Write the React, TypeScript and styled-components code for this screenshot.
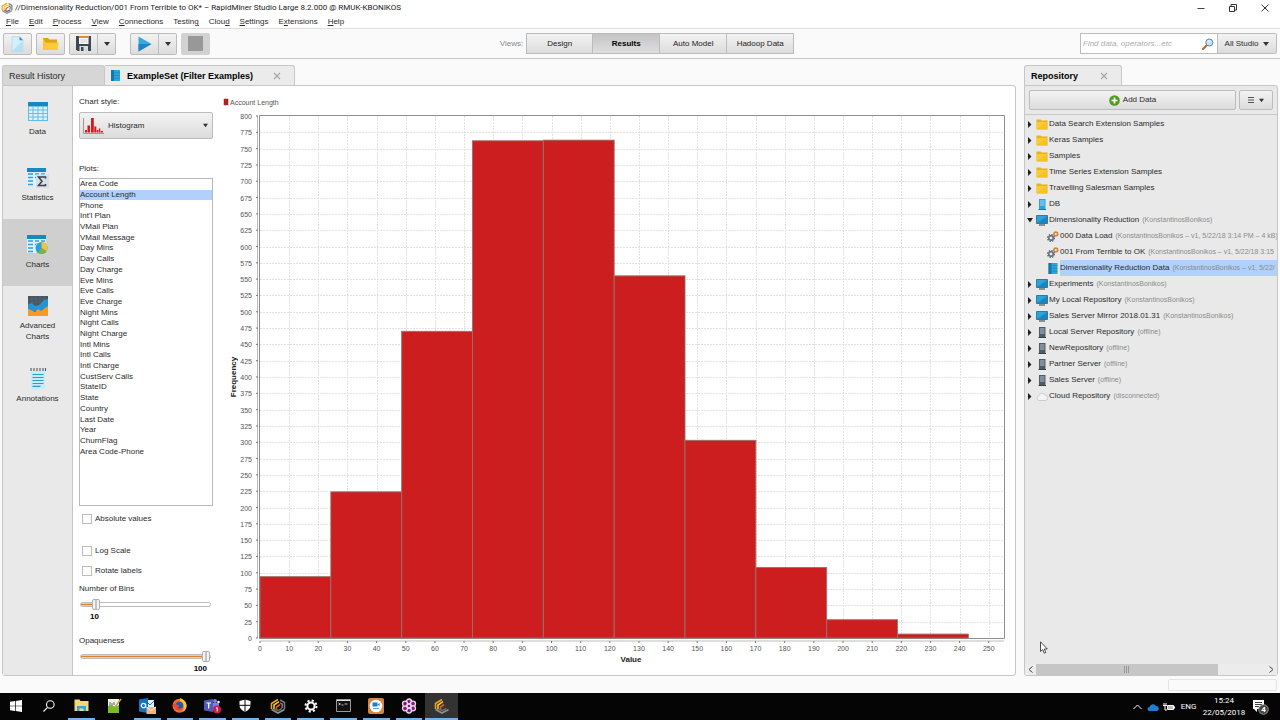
import React, { useState } from 'react';
import styled, { createGlobalStyle, css } from 'styled-components';

const sans = '"Liberation Sans", Arial, sans-serif';
const system = 'Roboto, "Open Sans", sans-serif';

const GlobalStyle = createGlobalStyle`
  *, *::before, *::after { box-sizing: border-box; }
  body { margin: 0; background: #fafafa; font-family: ${sans}; font-size: 8px; line-height: 10px; color: #2b2b2b; }
  button, input, select { font: inherit; color: inherit; margin: 0; padding: 0; }
  button { border: 0; background: none; }
  svg { display: block; flex: none; }
  ul { list-style: none; margin: 0; padding: 0; }
`;

const raised = css`
  border: 1px solid #bcbcbc;
  border-radius: 2px;
  background: linear-gradient(#f3f3f3, #dcdcdc);
`;

const Page = styled.div`
  min-height: 100vh;
  display: flex;
  flex-direction: column;
`;

/* ---------- window chrome ---------- */

const TitleBar = styled.header`
  display: flex;
  align-items: center;
  height: 16px;
  padding-left: 1px;
  gap: 2px;
  background: #fff;
  font-family: ${system};
  color: #222;
`;
const Title = styled.h1`
  flex: 1;
  margin: 0;
  font-size: inherit;
  font-weight: 400;
`;
const WindowButton = styled.button`
  width: 30px;
  height: 14px;
  display: grid;
  place-items: center;
`;
const MenuBar = styled.nav`
  display: flex;
  align-items: center;
  gap: 10px;
  height: 13px;
  padding-left: 6px;
  background: #fff;
  border-bottom: 1px solid #dedede;
`;
const MenuButton = styled.button`
  height: 12px;
  line-height: 12px;
  text-underline-offset: 1px;
`;

/* ---------- toolbar ---------- */

const Toolbar = styled.div`
  display: grid;
  grid-template-columns: 1fr auto 1fr;
  align-items: center;
  height: 30px;
  padding: 0 3px;
  border-bottom: 1px solid #c6c6c6;
`;
const ToolGroup = styled.div`
  display: flex;
  gap: 4px;
`;
const SplitButton = styled.div`
  display: flex;
  & + & { margin-left: 10px; }
  & > button:first-child { border-radius: 2px 0 0 2px; }
  & > button:last-child { border-radius: 0 2px 2px 0; border-left: 0; }
`;
const ToolButton = styled.button<{ $narrow?: boolean; $off?: boolean }>`
  ${raised}
  width: ${p => (p.$narrow ? 18 : 29)}px;
  height: 22px;
  display: grid;
  place-items: center;
  ${p => p.$off && css`background: #d2d2d2; border-color: #d2d2d2;`}
`;
const Views = styled.div`
  display: flex;
  align-items: center;
  gap: 3px;
  padding-left: 14px;
  color: #8a8a8a;
`;
const ViewSwitch = styled.div`
  display: flex;
  color: #222;
`;
const ViewButton = styled.button<{ $active?: boolean }>`
  ${raised}
  width: 67px;
  height: 21px;
  border-radius: 0;
  & + & { border-left: 0; }
  ${p => p.$active && css`background: linear-gradient(#c4c4c4, #dedede); font-weight: 700; color: #000;`}
`;
const Search = styled.div`
  justify-self: end;
  display: flex;
  height: 21px;
`;
const SearchBox = styled.label`
  display: flex;
  align-items: center;
  width: 138px;
  padding: 0 3px 0 2px;
  border: 1px solid #bcbcbc;
  background: #fff;
`;
const SearchInput = styled.input`
  flex: 1;
  min-width: 0;
  border: 0;
  outline: 0;
  font-style: italic;
  background: none;
  &::placeholder { color: #ababab; }
`;
const ScopeButton = styled.button`
  ${raised}
  display: flex;
  align-items: center;
  justify-content: center;
  gap: 5px;
  width: 59px;
  border-left: 0;
  border-radius: 0 2px 2px 0;
`;

/* ---------- panels ---------- */

const Workspace = styled.main`
  flex: 1;
  display: flex;
  gap: 8px;
  padding: 6px 2px 0;
`;
const Pane = styled.section<{ $side?: boolean }>`
  display: flex;
  flex-direction: column;
  min-width: 0;
  ${p => (p.$side ? css`width: 254px; flex: none;` : css`flex: 1;`)}
`;
const TabStrip = styled.div`
  display: flex;
  height: 20px;
`;
const Tab = styled.div<{ $active?: boolean; $width: number }>`
  display: flex;
  align-items: center;
  width: ${p => p.$width}px;
  padding: 0 5px 0 6px;
  border: 1px solid #c6c6c6;
  border-bottom: 0;
  background: ${p => (p.$active ? '#ebebeb' : '#d6d6d6')};
  border-radius: 3px 3px 0 0;
  font-size: 9px;
  & + & { border-left: 0; border-radius: 0 3px 0 0; }
  ${p => p.$active && css`font-weight: 700; color: #000;`}
`;
const TabLabel = styled.button`
  display: flex;
  align-items: center;
  gap: 7px;
  font-weight: inherit;
  white-space: nowrap;
`;
const TabClose = styled.button`
  margin-left: auto;
  margin-right: 8px;
`;
const PaneBody = styled.div<{ $shade?: boolean }>`
  flex: 1;
  display: flex;
  flex-direction: ${p => (p.$shade ? 'column' : 'row')};
  border: 1px solid #c6c6c6;
  border-radius: 0 3px 3px 3px;
  background: ${p => (p.$shade ? '#e9e9e9' : '#fff')};
  min-width: 0;
`;

const SideNav = styled.nav`
  width: 70px;
  border-right: 1px solid #c6c6c6;
  background: #e9e9e9;
`;
const SideList = styled.div`
  display: grid;
  grid-template-rows: repeat(5, 1fr);
  height: 333px;
`;
const SideButton = styled.button<{ $active?: boolean }>`
  display: flex;
  flex-direction: column;
  align-items: center;
  justify-content: center;
  gap: 4px;
  padding: 0 12px;
  line-height: 11px;
  background: ${p => (p.$active ? '#cfcfcf' : 'transparent')};
`;

/* ---------- chart settings ---------- */

const Settings = styled.form`
  width: 140px;
  padding: 11px 0 0 6px;
  display: flex;
  flex-direction: column;
`;
const FieldLabel = styled.label`
  line-height: 10px;
`;
const StylePicker = styled.div`
  ${raised}
  display: flex;
  align-items: center;
  width: 134px;
  height: 27px;
  margin: 5px 0 25px;
  padding: 0 4px 0 3px;
`;
const StyleSelect = styled.select`
  flex: 1;
  appearance: none;
  border: 0;
  background: none;
  padding-left: 4px;
  height: 100%;
`;
const PlotBox = styled.div`
  width: 134px;
  height: 328px;
  margin: 4px 0 8px;
  border: 1px solid #b8b8b8;
  background: #fff;
`;
const PlotList = styled.ul`
  display: grid;
  grid-template-rows: repeat(26, minmax(0, 1fr));
  height: 278px;
`;
const PlotItem = styled.button<{ $active?: boolean }>`
  display: block;
  width: 100%;
  height: 100%;
  line-height: 10px;
  text-align: left;
  background: ${p => (p.$active ? '#b0d1fc' : 'none')};
`;
const CheckRow = styled.label<{ $after: number }>`
  display: flex;
  align-items: center;
  gap: 3px;
  height: 10px;
  padding-left: 3px;
  margin-bottom: ${p => p.$after}px;
`;
const Check = styled.input`
  appearance: none;
  width: 10px;
  height: 10px;
  border: 1px solid #bdbdbd;
  background: #fff;
  &:checked { background: #f0a050; }
`;
const Range = styled.input`
  appearance: none;
  width: 131px;
  height: 11px;
  margin: 5px 0 2px 1px;
  background: none;
  &::-webkit-slider-runnable-track {
    height: 5px;
    border: 1px solid #bcbcbc;
    border-radius: 3px;
    background:
      linear-gradient(transparent 1px, #d9823a 1px, #d9823a 2px, transparent 2px) 0 0 / var(--fill) 100% no-repeat,
      linear-gradient(90deg, #f6c995 var(--fill), #fff var(--fill));
  }
  &::-webkit-slider-thumb {
    appearance: none;
    width: 8px;
    height: 11px;
    margin-top: -4px;
    border: 1px solid #b0b0b0;
    border-radius: 2px;
    background: linear-gradient(90deg, #f4f4f4 2px, #c4c4c4 2px, #c4c4c4 4px, #f4f4f4 4px);
  }
`;
const RangeValue = styled.output<{ $end?: boolean }>`
  width: 131px;
  padding: 0 3px 0 11px;
  text-align: ${p => (p.$end ? 'right' : 'left')};
  font-weight: 700;
  color: #000;
  & + label { margin-top: 14px; }
`;

const ChartArea = styled.figure`
  flex: 1;
  min-width: 0;
  margin: 0;
  svg { width: 100%; height: auto; }
  text { font-family: ${sans}; font-size: 7px; fill: #555; }
  text.title { font-size: 8px; font-weight: 700; fill: #222; }
`;

/* ---------- repository ---------- */

const RepoActions = styled.div`
  display: flex;
  gap: 3px;
  padding: 4px;
  border-bottom: 1px solid #c9c9c9;
`;
const RepoButton = styled.button<{ $grow?: boolean }>`
  ${raised}
  display: flex;
  align-items: center;
  justify-content: center;
  gap: 3px;
  height: 20px;
  ${p => (p.$grow ? css`flex: 1;` : css`width: 34px; gap: 5px;`)}
`;
const Tree = styled.ul`
  flex: 1;
  padding-top: 1px;
  overflow: hidden;
`;
const TreeRow = styled.li<{ $child?: boolean }>`
  display: flex;
  align-items: center;
  gap: 1px;
  height: 16px;
  padding-left: ${p => (p.$child ? 22 : 2)}px;
  white-space: nowrap;
`;
const Toggle = styled.button`
  width: 8px;
  height: 16px;
  display: flex;
  align-items: center;
`;
const TreeLabel = styled.button<{ $active?: boolean }>`
  display: flex;
  align-items: center;
  gap: 3px;
  height: 16px;
  white-space: nowrap;
  ${p => p.$active && css`background: #b0d1fc; flex: 1;`}
`;
const Meta = styled.small`
  font-size: 7px;
  color: #8b8b8b;
`;
const ScrollBar = styled.div`
  display: flex;
  height: 11px;
  background: #ececec;
`;
const ScrollArrow = styled.button`
  width: 11px;
  display: grid;
  place-items: center;
`;
const ScrollTrack = styled.div`
  flex: 1;
`;
const ScrollThumb = styled.div`
  width: 79%;
  height: 100%;
  display: grid;
  place-items: center;
  background: #c6c6c6;
`;
const Pointer = styled.svg`
  position: fixed;
  left: 1040px;
  top: 641px;
`;
const StatusBar = styled.footer`
  display: flex;
  justify-content: flex-end;
  height: 17px;
  padding: 3px 3px 2px;
`;
const StatusBox = styled.div`
  width: 109px;
  border: 1px solid #e4e4e4;
  border-radius: 2px;
`;

/* ---------- taskbar ---------- */

const TaskBar = styled.div`
  display: flex;
  justify-content: space-between;
  height: 27px;
  background: #050505;
  color: #fff;
  font-family: ${system};
`;
const TaskButtons = styled.div`
  display: grid;
  grid-template-columns: repeat(14, 1fr);
  width: 458px;
`;
const TaskButton = styled.button<{ $running?: boolean; $active?: boolean }>`
  display: grid;
  place-items: center;
  margin: 0 3px;
  border-bottom: 2px solid ${p => (p.$running ? '#76b0e4' : 'transparent')};
  ${p => p.$active && css`margin: 0; background: #333;`}
`;
const Tray = styled.div`
  display: flex;
  align-items: center;
  padding-right: 8px;
`;
const TrayButton = styled.button<{ $width: number }>`
  width: ${p => p.$width}px;
  display: grid;
  place-items: center;
  line-height: 12px;
  white-space: nowrap;
`;

/* ---------- icons ---------- */

const Caret = ({ size = 6 }: { size?: number }) => (
  <svg width={size} height={size} viewBox="0 0 6 6"><path d="M0 1h6L3 5z" fill="#333" /></svg>
);
const Cross = () => (
  <svg width="8" height="8" viewBox="0 0 8 8"><path d="M1 1l6 6M7 1L1 7" stroke="#a5a5a5" strokeWidth="1.100" /></svg>
);
const FolderIcon = () => (
  <svg width="12" height="12" viewBox="0 0 12 12">
    <path d="M.5 1.500h4l1 1h6v9h-11z" fill="#e8b01c" />
    <path d="M1 4h10v7H1z" fill="#fccb32" />
    <path d="M1 11L11 4v7z" fill="#f7c024" />
  </svg>
);
const OpenFolder = () => (
  <svg width="17" height="14" viewBox="0 0 17 14">
    <path d="M1 1h5l1.500 1.500H15V7H1z" fill="#e0a312" />
    <path d="M1 13V1.500L4 5.500h12.500L15.500 13z" fill="#fbc02d" />
    <path d="M3.500 6h13l-1 7H1.500z" fill="#ffca3a" />
  </svg>
);
const NewIcon = () => (
  <svg width="13" height="16" viewBox="0 0 13 16">
    <path d="M1 .5h7.500L12 4v11.500H1z" fill="#d3effb" stroke="#a9d4e8" strokeWidth=".6" />
    <path d="M1.400 15L11.500 5v10z" fill="#b5e1f6" />
    <path d="M8.500.5v3.800H12z" fill="#2f94c6" />
  </svg>
);
const SaveIcon = () => (
  <svg width="15" height="15" viewBox="0 0 15 15">
    <path d="M0 0h15v15H1.500L0 13.500z" fill="#3e4852" />
    <path d="M3 0h9.500v8H3z" fill="#fff" /><path d="M3 0h9.500v2H3z" fill="#ef8a2c" />
    <path d="M4 4h7.500M4 6h7.500" stroke="#aaa" strokeWidth=".6" />
    <path d="M3.500 10h8.500v5H3.500z" fill="#d6dde2" /><path d="M5 11h2.500v4H5z" fill="#3e4852" />
  </svg>
);
const PlayIcon = () => (
  <svg width="14" height="16" viewBox="0 0 14 16">
    <path d="M.5.5L13.500 8 .5 15.500z" fill="#38a9e0" /><path d="M.5 8h13L.5 15.500z" fill="#1c86c2" />
  </svg>
);
const Lens = () => (
  <svg width="12" height="12" viewBox="0 0 12 12">
    <path d="M1 11l4-4" stroke="#b06c34" strokeWidth="2.200" strokeLinecap="round" />
    <circle cx="7.300" cy="4.500" r="3.500" fill="#c4e7f8" stroke="#5b83a0" strokeWidth="1" />
    <path d="M5.500 4a2 2 0 0 1 2-1.500" stroke="#fff" fill="none" strokeWidth=".8" />
  </svg>
);
const Columns = ({ w = 9 }: { w?: number }) => (
  <svg width={w} height="11" viewBox="0 0 9 11">
    <path d="M0 0h9v11H0z" fill="#2ba3dd" /><path d="M0 0h3v11H0z" fill="#1676a9" />
    <path d="M3 2.700h6M3 5.500h6M3 8.200h6" stroke="#1c8ac4" strokeWidth=".7" />
  </svg>
);
const RapidMiner = ({ size = 12, dim }: { size?: number; dim?: boolean }) => (
  <svg width={size} height={size} viewBox="0 0 16 16" fill="none" strokeWidth="1.600">
    <path d="M1.500 11V5.500L8 1.500" stroke="#f0a020" />
    <path d="M4 11.500V7l5-3.300" stroke="#e8d028" />
    <path d="M6.500 12V9L10 6.500" stroke="#e25822" />
    <path d="M1.500 11.500L8 15l6.500-3.500" stroke="#8f8f8f" />
    <path d="M4.500 11L8 12.700l4-2.200" stroke="#6c6c6c" />
    {!dim && <path d="M10 2l4.500 2.500V11M10 5l2.200 1.200V10" stroke="#777" />}
  </svg>
);
const RowsBase = () => (
  <>
    <path d="M0 4h9v14H0zM9 4h10v4H9z" fill="#dff2fb" />
    <path d="M0 0h19v4H0z" fill="#1589c2" />
    <path d="M1 6h5M1 9.500h5M1 13h5M1 16.500h5M8 6h4M8 9.500h1M14 6h4" stroke="#2ba3dd" strokeWidth="1.500" />
  </>
);
const DataIcon = () => (
  <svg width="20" height="20" viewBox="0 0 20 20">
    <path d="M0 0h20v19H0z" fill="#dff2fb" />
    <path d="M0 0h20v4.500H0z" fill="#1589c2" />
    <path d="M.5 4.500v14M5 4.500V19M10 4.500V19M15 4.500V19M19.500 4.500v14M0 8h20M0 11.500h20M0 15h20M0 18.500h20" stroke="#63bde6" strokeWidth="1" />
  </svg>
);
const StatisticsIcon = () => (
  <svg width="22" height="20" viewBox="0 0 22 20">
    <RowsBase /><path d="M9 6.500h13V20H9z" fill="#d7dfe4" />
    <path d="M18.500 10.500V9h-7l3.500 4.300-3.500 4.200h7V16" fill="none" stroke="#34424e" strokeWidth="1.500" />
  </svg>
);
const ChartsIcon = () => (
  <svg width="22" height="20" viewBox="0 0 22 20">
    <RowsBase /><circle cx="14.500" cy="13" r="6" fill="#2d9ed8" />
    <path d="M14.500 13V7a6 6 0 0 1 5 9.300z" fill="#f7c331" />
    <path d="M14.500 13l5 3.300a6 6 0 0 1-8.500 1.600z" fill="#7cb342" />
  </svg>
);
const AdvancedIcon = () => (
  <svg width="20" height="20" viewBox="0 0 20 20">
    <path d="M0 0h20v20H0z" fill="#475563" />
    <path d="M0 3h20M0 6h20M4 0v10M8 0v10M12 0v10M16 0v10" stroke="#5d6c7a" strokeWidth=".5" />
    <path d="M0 8l4-1 3 3 4-1 5-5 4-1v12H0z" fill="#2494d2" />
    <path d="M0 13l3 1 4 2 3-3 3 2 4-3 3-2v10H0z" fill="#f59a23" />
  </svg>
);
const NotesIcon = () => (
  <svg width="16" height="21" viewBox="0 0 16 21">
    <path d="M1 3h14v18H1z" fill="#c9eaf8" />
    <path d="M2.500 6.500h11M2.500 9.500h11M2.500 12.500h11M2.500 15.500h11M2.500 18.300h8" stroke="#2a9dd4" strokeWidth="1.200" />
    <path d="M1 0v3M4 0v3M7 0v3M10 0v3M13 0v3M15.500 0v3" stroke="#4b5863" strokeWidth="1.100" />
  </svg>
);
const HistogramIcon = () => (
  <svg width="21" height="17" viewBox="0 0 21 17">
    <path d="M.5 1v15.500H21" fill="none" stroke="#999" />
    <path d="M2 13h2v2.500H2zM4.500 8.500H7v7H4.500zM8 1h2.800v14.500H8zM11.300 9.500h2v6h-2zM13.800 13h1.500v2.500h-1.500zM15.800 11.500h1.500v4h-1.500zM17.800 14H20v1.500h-2.200z" fill="#d81818" />
  </svg>
);
const Monitor = () => (
  <svg width="12" height="11" viewBox="0 0 12 11">
    <path d="M.5.500h11v8H.5z" fill="#2aa5de" stroke="#2f5f7d" strokeWidth=".8" />
    <path d="M1 8l10-7v7z" fill="#1787c4" /><path d="M3 10h6" stroke="#44525c" strokeWidth="1.200" />
  </svg>
);
const Server = ({ blue }: { blue?: boolean }) => (
  <svg width="12" height="11" viewBox="0 0 12 11">
    <path d="M3 0h6.500v10.500H3z" fill={blue ? '#2ba3dd' : '#4d5c67'} />
    <path d="M4 2h4.500M4 4h4.500M4 6h4.500" stroke={blue ? '#a5dcf5' : '#b4c5cf'} strokeWidth="1" />
    <path d="M2.500 10.500h7.500" stroke={blue ? '#1476aa' : '#36424b'} />
  </svg>
);
const Cloud = () => (
  <svg width="12" height="11" viewBox="0 0 12 11">
    <path d="M3 9.500a2.300 2.300 0 0 1-.3-4.500 3.200 3.200 0 0 1 6-1 2.700 2.700 0 0 1 .5 5.500z" fill="#f2f4f6" stroke="#b9bfc5" strokeWidth=".7" />
  </svg>
);
const Gears = () => (
  <svg width="12" height="11" viewBox="0 0 12 11" fill="none">
    <circle cx="8.800" cy="3" r="1.900" stroke="#cf8443" strokeWidth="1.600" />
    <circle cx="4" cy="7" r="3.400" stroke="#4f5c66" strokeWidth="1.200" strokeDasharray="1.400 1.270" />
    <circle cx="4" cy="7" r="2.200" stroke="#5d6a74" strokeWidth="1.500" />
  </svg>
);
const Plus = () => (
  <svg width="11" height="11" viewBox="0 0 11 11">
    <circle cx="5.500" cy="5.500" r="5.300" fill="#4f9c1c" /><path d="M5.500 2.500v6M2.500 5.500h6" stroke="#fff" strokeWidth="1.700" />
  </svg>
);

/* ---------- data ---------- */

const menus: [string, number][] = [
  ['File', 0], ['Edit', 0], ['Process', 0], ['View', 0], ['Connections', 0],
  ['Testing', 6], ['Cloud', 4], ['Settings', 0], ['Extensions', 1], ['Help', 0],
];
const views = ['Design', 'Results', 'Auto Model', 'Hadoop Data'];
const sections = [
  { name: 'Data', icon: <DataIcon /> },
  { name: 'Statistics', icon: <StatisticsIcon /> },
  { name: 'Charts', icon: <ChartsIcon /> },
  { name: 'Advanced Charts', icon: <AdvancedIcon /> },
  { name: 'Annotations', icon: <NotesIcon /> },
];
const plots = [
  'Area Code', 'Account Length', 'Phone', "Int'l Plan", 'VMail Plan', 'VMail Message',
  'Day Mins', 'Day Calls', 'Day Charge', 'Eve Mins', 'Eve Calls', 'Eve Charge',
  'Night Mins', 'Night Calls', 'Night Charge', 'Intl Mins', 'Intl Calls', 'Intl Charge',
  'CustServ Calls', 'StateID', 'State', 'Country', 'Last Date', 'Year', 'ChurnFlag', 'Area Code-Phone',
];
const bins = [94, 224, 470, 762, 763, 555, 303, 108, 28, 6];

type Node = { name: string; meta?: string; icon: React.ReactNode; child?: boolean; open?: boolean; active?: boolean };
const owner = '(KonstantinosBonikos)';
const tree: Node[] = [
  { name: 'Data Search Extension Samples', icon: <FolderIcon /> },
  { name: 'Keras Samples', icon: <FolderIcon /> },
  { name: 'Samples', icon: <FolderIcon /> },
  { name: 'Time Series Extension Samples', icon: <FolderIcon /> },
  { name: 'Travelling Salesman Samples', icon: <FolderIcon /> },
  { name: 'DB', icon: <Server blue /> },
  { name: 'Dimensionality Reduction', meta: owner, icon: <Monitor />, open: true },
  { name: '000 Data Load', meta: '(KonstantinosBonikos – v1, 5/22/18 3:14 PM – 4 kB)', icon: <Gears />, child: true },
  { name: '001 From Terrible to OK', meta: '(KonstantinosBonikos – v1, 5/22/18 3:15', icon: <Gears />, child: true },
  { name: 'Dimensionality Reduction Data', meta: '(KonstantinosBonikos – v1, 5/22/', icon: <Columns w={12} />, child: true, active: true },
  { name: 'Experiments', meta: owner, icon: <Monitor /> },
  { name: 'My Local Repository', meta: owner, icon: <Monitor /> },
  { name: 'Sales Server Mirror 2018.01.31', meta: owner, icon: <Monitor /> },
  { name: 'Local Server Repository', meta: '(offline)', icon: <Server /> },
  { name: 'NewRepository', meta: '(offline)', icon: <Server /> },
  { name: 'Partner Server', meta: '(offline)', icon: <Server /> },
  { name: 'Sales Server', meta: '(offline)', icon: <Server /> },
  { name: 'Cloud Repository', meta: '(disconnected)', icon: <Cloud /> },
];

/* ---------- chart ---------- */

const plot = { left: 47, right: 791, top: 30, bottom: 552 };
const xAt = (v: number) => plot.left + v * 2.915;
const yAt = (v: number) => plot.bottom - v * 0.6525;
const range = (n: number, step: number) => Array.from({ length: n }, (_, i) => i * step);

const Histogram = () => (
  <ChartArea>
    <svg viewBox="0 0 802 589" role="img" aria-label="Histogram of Account Length">
      <rect x="11" y="13" width="4" height="6" fill="#c4191d" stroke="#8d2a2a" strokeWidth=".5" />
      <text x="17" y="19">Account Length</text>
      <g stroke="#e2e2e2" strokeWidth="1" strokeDasharray="2 1">
        {range(26, 10).slice(1).map(v => <path key={v} d={`M${Math.round(xAt(v)) + 0.5} ${plot.top}V${plot.bottom}`} />)}
        {range(32, 25).slice(1).map(v => <path key={v} d={`M${plot.left} ${Math.round(yAt(v)) + 0.5}H${plot.right}`} />)}
      </g>
      <path d={`M${plot.left - 0.5} ${plot.top - 0.5}H${plot.right + 0.5}V${plot.bottom + 0.5}H${plot.left - 0.5}z`} fill="none" stroke="#8e8e8e" />
      {bins.map((n, i) => (
        <rect key={i} x={xAt(i * 24.3)} y={yAt(n)} width={24.3 * 2.915} height={n * 0.6525} fill="#cc1e1e" stroke="#97706c" strokeWidth=".9" />
      ))}
      <path d={`M${plot.left - 2.5} ${plot.top}V${plot.bottom}M${plot.left} ${plot.bottom + 3}H${plot.right}`} stroke="#bdbdbd" fill="none" />
      {range(33, 25).map(v => (
        <g key={v}>
          <path d={`M${plot.left - 4} ${yAt(v)}h2`} stroke="#777" />
          <text x={plot.left - 8} y={yAt(v) + 3} textAnchor="end">{v}</text>
        </g>
      ))}
      {range(26, 10).map(v => (
        <g key={v}>
          <path d={`M${xAt(v)} ${plot.bottom + 3}v2`} stroke="#777" />
          <text x={xAt(v)} y={plot.bottom + 13} textAnchor="middle">{v}</text>
        </g>
      ))}
      <text className="title" x="418" y="576" textAnchor="middle">Value</text>
      <text className="title" transform="translate(23 291) rotate(-90)" textAnchor="middle">Frequency</text>
    </svg>
  </ChartArea>
);

const tasks: { name: string; running?: boolean; active?: boolean; icon: React.ReactNode }[] = [
  { name: 'Start', icon: <svg width="12" height="12" viewBox="0 0 12 12"><path d="M0 1.700l5-.7v4.700H0zM5.700.9L12 0v5.700H5.700zM0 6.300h5V11l-5-.7zM5.700 6.300H12V12l-6.300-.9z" fill="#fff" /></svg> },
  { name: 'Search', icon: <svg width="12" height="12" viewBox="0 0 12 12" fill="none" stroke="#fff" strokeWidth="1.100"><circle cx="7.300" cy="4.500" r="3.800" /><path d="M4.500 7.300L.5 11.500" /></svg> },
  { name: 'File Explorer', running: true, icon: <svg width="15" height="13" viewBox="0 0 15 13"><path d="M.5.500h5l1 1.500h8v10H.5z" fill="#f5d67b" /><path d="M3 12V7h9v5h-2.500V9.500h-4V12z" fill="#36a3dc" /></svg> },
  { name: 'Notepad++', icon: <svg width="15" height="16" viewBox="0 0 15 16"><path d="M1 1h11v14H1z" fill="#eef3e2" /><path d="M1 8c4-2 7 2 11-1v8H1z" fill="#79b928" /><path d="M3 4v4M5 5v3M7 4v3" stroke="#567" /><path d="M14 1L8 9" stroke="#d79b3c" strokeWidth="1.500" /></svg> },
  { name: 'Outlook', running: true, icon: <svg width="17" height="16" viewBox="0 0 17 16"><path d="M8 2h7v8H8z" fill="#e9f2fa" /><path d="M9 5l2 2 4-4" stroke="#1877c7" fill="none" /><path d="M0 1.500L9 0v15l-9-1.500z" fill="#1173c7" /><circle cx="4.500" cy="7.500" r="2.200" fill="none" stroke="#fff" strokeWidth="1.300" /><path d="M7.500 9H17v7H7.500z" fill="#f2b67a" /><path d="M7.500 9l4.700 3.500L17 9" fill="none" stroke="#fff3e4" /></svg> },
  { name: 'Firefox', running: true, icon: <svg width="15" height="15" viewBox="0 0 15 15"><circle cx="7.500" cy="7.800" r="7" fill="#f4702a" /><path d="M8 0c5 2 7 5 6.500 9a7 7 0 0 1-4 5c2-3 2-8-2.500-9z" fill="#fcc62c" /><circle cx="7.500" cy="7.200" r="3.800" fill="#2b56a5" /><path d="M1 6c2-1 3 0 4.500 1 2 0 2 2 0 2.500 2 2 4 1 5.500 0-2 5-8 4-10-3z" fill="#e8472b" /></svg> },
  { name: 'Teams', running: true, icon: <svg width="17" height="16" viewBox="0 0 17 16"><circle cx="11" cy="3" r="2" fill="#7b83eb" /><circle cx="14.500" cy="4" r="1.300" fill="#fff" /><path d="M9 5h6v7H9z" fill="#7b83eb" /><path d="M0 2.500L9 1v13l-9-1.500z" fill="#5059b5" /><path d="M2.500 5h4.500M4.700 5v5.500" stroke="#fff" strokeWidth="1.200" /><circle cx="13" cy="11.500" r="4" fill="#c4204b" /><path d="M12 10.300l1.200-.8v4" stroke="#fff" fill="none" strokeWidth=".9" /></svg> },
  { name: 'Security', running: true, icon: <svg width="12" height="13" viewBox="0 0 12 13"><path d="M6 .5l5.500 1.500v4.500C11.500 9.500 9 11.500 6 13 3 11.500.5 9.500.5 6.500V2z" fill="#fff" /><path d="M6 0v13M0 6.300h12" stroke="#050505" /></svg> },
  { name: 'RapidMiner Studio', running: true, icon: <RapidMiner size={16} /> },
  { name: 'Settings', running: true, icon: <svg width="14" height="14" viewBox="0 0 14 14" fill="none" stroke="#fff"><circle cx="7" cy="7" r="3.600" strokeWidth="2" /><circle cx="7" cy="7" r="5.500" strokeWidth="2" strokeDasharray="2.160 2.160" /></svg> },
  { name: 'Command Prompt', running: true, icon: <svg width="15" height="13" viewBox="0 0 15 13"><path d="M.5.500h14v12H.5z" fill="#111" stroke="#999" /><path d="M1 1.500h13" stroke="#ddd" /><path d="M2.500 4l2 1-2 1M5.500 6h2M8.500 5h3" stroke="#ddd" strokeWidth=".8" fill="none" /></svg> },
  { name: 'Camera', running: true, icon: <svg width="16" height="16" viewBox="0 0 16 16"><rect width="16" height="16" rx="2" fill="#d48545" /><circle cx="8" cy="8" r="6.300" fill="#fff" /><path d="M4.500 4.500h5v4h-5zM9.500 6.500l2-1.500v3z" fill="#1f7fc0" /><path d="M5 10.500h6" stroke="#4caedb" /></svg> },
  { name: 'GoToMeeting', running: true, icon: <svg width="16" height="16" viewBox="0 0 16 16" fill="#7d1f78" stroke="#f0d8ee" strokeWidth="1.300"><circle cx="8" cy="3.500" r="2.500" /><circle cx="12" cy="5.700" r="2.500" /><circle cx="12" cy="10.300" r="2.500" /><circle cx="8" cy="12.500" r="2.500" /><circle cx="4" cy="10.300" r="2.500" /><circle cx="4" cy="5.700" r="2.500" /><circle cx="8" cy="8" r="2" /></svg> },
  { name: 'RapidMiner results', running: true, active: true, icon: <RapidMiner size={16} dim /> },
];

const Mnemonic = ({ text, at }: { text: string; at: number }) => (
  <>{text.slice(0, at)}<u>{text[at]}</u>{text.slice(at + 1)}</>
);

export default function App() {
  const [selected, setSelected] = useState('Account Length');
  const [numBins, setNumBins] = useState(10);
  const [opacity, setOpacity] = useState(100);

  return (
    <Page>
      <GlobalStyle />
      <TitleBar>
        <RapidMiner />
        <Title>//Dimensionality Reduction/001 From Terrible to OK* – RapidMiner Studio Large 8.2.000 @ RMUK-KBONIKOS</Title>
        <WindowButton aria-label="Minimize"><svg width="8" height="8" viewBox="0 0 8 8"><path d="M.5 4.500h7" stroke="#444" /></svg></WindowButton>
        <WindowButton aria-label="Restore"><svg width="8" height="8" viewBox="0 0 8 8" fill="none" stroke="#333"><path d="M.5 2.500h5v5h-5zM2 2V.5h5.500V6H6" /></svg></WindowButton>
        <WindowButton aria-label="Close"><svg width="8" height="8" viewBox="0 0 8 8" stroke="#333"><path d="M.5.500l7 7M7.500.5l-7 7" /></svg></WindowButton>
      </TitleBar>
      <MenuBar>
        {menus.map(([text, at]) => <MenuButton key={text}><Mnemonic text={text} at={at} /></MenuButton>)}
      </MenuBar>

      <Toolbar>
        <ToolGroup>
          <ToolButton aria-label="New process"><NewIcon /></ToolButton>
          <ToolButton aria-label="Open"><OpenFolder /></ToolButton>
          <SplitButton>
            <ToolButton aria-label="Save"><SaveIcon /></ToolButton>
            <ToolButton $narrow aria-label="Save options"><Caret /></ToolButton>
          </SplitButton>
          <SplitButton>
            <ToolButton aria-label="Run"><PlayIcon /></ToolButton>
            <ToolButton $narrow aria-label="Run options"><Caret /></ToolButton>
          </SplitButton>
          <ToolButton $off aria-label="Stop"><svg width="15" height="15" viewBox="0 0 15 15"><path d="M0 0h15v15H0z" fill="#989898" /></svg></ToolButton>
        </ToolGroup>
        <Views>
          <span>Views:</span>
          <ViewSwitch>
            {views.map(v => <ViewButton key={v} $active={v === 'Results'}>{v}</ViewButton>)}
          </ViewSwitch>
        </Views>
        <Search>
          <SearchBox>
            <SearchInput type="text" aria-label="Search" placeholder="Find data, operators...etc" />
            <Lens />
          </SearchBox>
          <ScopeButton>All Studio <Caret /></ScopeButton>
        </Search>
      </Toolbar>

      <Workspace>
        <Pane>
          <TabStrip>
            <Tab $width={103}><TabLabel>Result History</TabLabel></Tab>
            <Tab $width={190} $active>
              <TabLabel><Columns /> ExampleSet (Filter Examples)</TabLabel>
              <TabClose aria-label="Close tab"><Cross /></TabClose>
            </Tab>
          </TabStrip>
          <PaneBody>
            <SideNav>
              <SideList>
                {sections.map(s => (
                  <SideButton key={s.name} $active={s.name === 'Charts'}>{s.icon}<span>{s.name}</span></SideButton>
                ))}
              </SideList>
            </SideNav>
            <Settings>
              <FieldLabel htmlFor="style">Chart style:</FieldLabel>
              <StylePicker>
                <HistogramIcon />
                <StyleSelect id="style" defaultValue="Histogram"><option>Histogram</option></StyleSelect>
                <Caret size={5} />
              </StylePicker>
              <span id="plots">Plots:</span>
              <PlotBox>
                <PlotList role="listbox" aria-labelledby="plots">
                  {plots.map(p => (
                    <li key={p} role="presentation">
                      <PlotItem type="button" role="option" aria-selected={p === selected} $active={p === selected} onClick={() => setSelected(p)}>{p}</PlotItem>
                    </li>
                  ))}
                </PlotList>
              </PlotBox>
              <CheckRow $after={22}><Check type="checkbox" />Absolute values</CheckRow>
              <CheckRow $after={10}><Check type="checkbox" />Log Scale</CheckRow>
              <CheckRow $after={8}><Check type="checkbox" />Rotate labels</CheckRow>
              <FieldLabel htmlFor="bins">Number of Bins</FieldLabel>
              <Range id="bins" type="range" min={1} max={100} value={numBins} onChange={e => setNumBins(+e.target.value)} style={{ '--fill': `${numBins}%` } as React.CSSProperties} />
              <RangeValue>{numBins}</RangeValue>
              <FieldLabel htmlFor="opaque">Opaqueness</FieldLabel>
              <Range id="opaque" type="range" min={0} max={100} value={opacity} onChange={e => setOpacity(+e.target.value)} style={{ '--fill': `${opacity}%` } as React.CSSProperties} />
              <RangeValue $end>{opacity}</RangeValue>
            </Settings>
            <Histogram />
          </PaneBody>
        </Pane>

        <Pane $side>
          <TabStrip>
            <Tab $width={98} $active>
              <TabLabel>Repository</TabLabel>
              <TabClose aria-label="Close tab"><Cross /></TabClose>
            </Tab>
          </TabStrip>
          <PaneBody $shade>
            <RepoActions>
              <RepoButton $grow><Plus /> Add Data</RepoButton>
              <RepoButton aria-label="Repository menu">
                <svg width="6" height="6" viewBox="0 0 6 6"><path d="M0 .5h6M0 3h6M0 5.500h6" stroke="#555" /></svg>
                <Caret size={5} />
              </RepoButton>
            </RepoActions>
            <Tree>
              {tree.map(n => (
                <TreeRow key={n.name} $child={n.child}>
                  {!n.child && (
                    <Toggle aria-label={`Toggle ${n.name}`}>
                      <svg width="6" height="7" viewBox="0 0 6 7"><path d={n.open ? 'M0 1h6L3 5.500z' : 'M1 0l3.500 3.500L1 7z'} fill="#222" /></svg>
                    </Toggle>
                  )}
                  {n.icon}
                  <TreeLabel $active={n.active}>{n.name}{n.meta && <Meta>{n.meta}</Meta>}</TreeLabel>
                </TreeRow>
              ))}
            </Tree>
            <ScrollBar>
              <ScrollArrow aria-label="Scroll left"><svg width="5" height="7" viewBox="0 0 5 7"><path d="M4.500.5l-3.500 3 3.500 3" fill="none" stroke="#444" /></svg></ScrollArrow>
              <ScrollTrack>
                <ScrollThumb><svg width="5" height="7" viewBox="0 0 5 7"><path d="M.5 0v7M2.500 0v7M4.500 0v7" stroke="#999" /></svg></ScrollThumb>
              </ScrollTrack>
              <ScrollArrow aria-label="Scroll right"><svg width="5" height="7" viewBox="0 0 5 7"><path d="M.5.500l3.500 3-3.500 3" fill="none" stroke="#444" /></svg></ScrollArrow>
            </ScrollBar>
          </PaneBody>
        </Pane>
      </Workspace>

      <StatusBar><StatusBox /></StatusBar>

      <TaskBar>
        <TaskButtons>
          {tasks.map(t => <TaskButton key={t.name} aria-label={t.name} $running={t.running} $active={t.active}>{t.icon}</TaskButton>)}
        </TaskButtons>
        <Tray>
          <TrayButton $width={16} aria-label="Hidden icons"><svg width="9" height="6" viewBox="0 0 9 6"><path d="M.5 5l4-4 4 4" fill="none" stroke="#fff" /></svg></TrayButton>
          <TrayButton $width={16} aria-label="OneDrive"><svg width="12" height="8" viewBox="0 0 12 8"><path d="M2.500 8a2 2 0 0 1 0-4A3.500 3.500 0 0 1 9 3a2.500 2.500 0 0 1 .5 5z" fill="#1b7fd6" /></svg></TrayButton>
          <TrayButton $width={16} aria-label="Battery"><svg width="12" height="8" viewBox="0 0 12 8"><path d="M4.500 2.500h6v4h-6z" fill="#bbb" stroke="#fff" /><path d="M11.500 3.500v2M1 0v2M3 0v2M0 2.500h4M2 3v4h2" stroke="#fff" fill="none" /></svg></TrayButton>
          <TrayButton $width={23}>ENG</TrayButton>
          <TrayButton $width={48}><time>15:24</time><time>22/05/2018</time></TrayButton>
          <TrayButton $width={24} aria-label="4 notifications">
            <svg width="17" height="16" viewBox="0 0 17 16">
              <path d="M1 1h11v9H5v3l-3-3H1z" fill="#fff" /><path d="M3 3.500h7M3 5.500h7M3 7.500h4" stroke="#111" strokeWidth=".8" />
              <circle cx="11.500" cy="10.500" r="4.800" fill="#444" stroke="#aaa" strokeWidth=".8" />
              <text x="11.500" y="13.300" textAnchor="middle" fontSize="8" fontWeight="700" fill="#fff">4</text>
            </svg>
          </TrayButton>
        </Tray>
      </TaskBar>
      <Pointer width="8" height="13" viewBox="0 0 8 13" aria-hidden="true">
        <path d="M.5.800v9.700l2.200-2 1.500 3.700 1.600-.7-1.500-3.500h3z" fill="#fff" stroke="#222" strokeWidth=".8" />
      </Pointer>
    </Page>
  );
}
